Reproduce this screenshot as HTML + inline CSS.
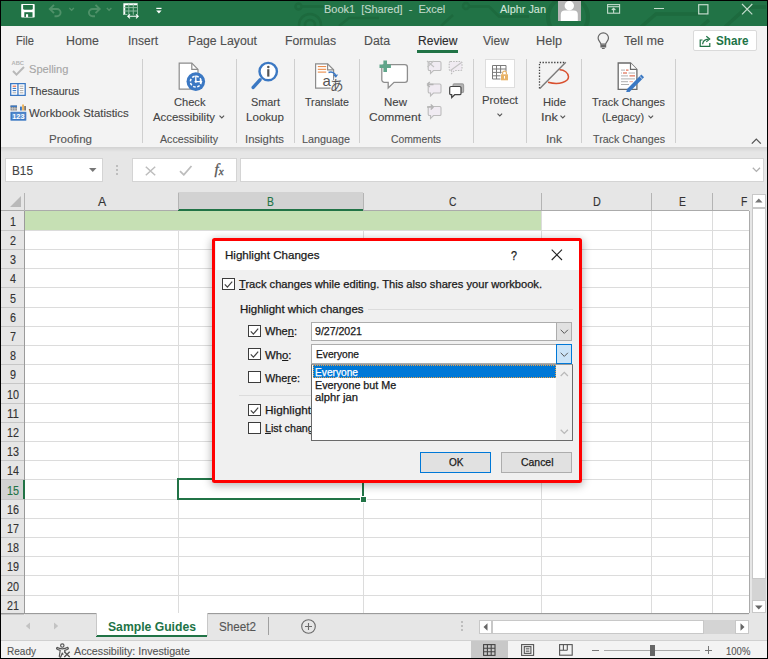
<!DOCTYPE html>
<html lang="en"><head><meta charset="utf-8"><title>Book1 [Shared] - Excel</title>
<style>
html,body{margin:0;padding:0;background:#000;}
body{width:768px;height:659px;position:relative;overflow:hidden;font-family:"Liberation Sans",sans-serif;}
.t{position:absolute;white-space:nowrap;line-height:16px;height:16px;transform-origin:0 50%;-webkit-text-stroke:0.12px;}
.r{position:absolute;}
u{text-decoration:underline;text-underline-offset:1px;}
</style></head><body>
<div class="r" style="left:0px;top:0px;width:768px;height:659px;background:#000;"></div>
<div class="r" style="left:1px;top:1px;width:765.5px;height:25px;background:#217346;"></div>
<div class="r" style="left:1px;top:26px;width:765.5px;height:121px;background:#f3f3f3;"></div>
<div class="r" style="left:1px;top:147px;width:765.5px;height:493px;background:#e6e6e6;"></div>
<div class="r" style="left:1px;top:147px;width:765.5px;height:5px;background:linear-gradient(#d2d2d2,#e6e6e6)"></div>
<div class="r" style="left:1px;top:640px;width:765.5px;height:18px;background:#f3f3f3;"></div>
<div class="r" style="left:1px;top:640px;width:765.5px;height:1px;background:#d0d0d0;"></div>
<svg class="r" style="left:1px;top:1px;" width="765" height="25" viewBox="0 0 765 25"><g fill="none" stroke="#1d6a3e" stroke-width="2.500"><circle cx="297.500" cy="5.500" r="3"/><path d="M300.500 5.500h22l8 8"/><circle cx="309" cy="24" r="11"/><circle cx="309" cy="24" r="5"/><path d="M338 25l10-8h30"/><circle cx="465" cy="5" r="3"/><path d="M468 5.500h20l10 10h30"/><path d="M440 25l12-11"/><circle cx="567" cy="16" r="20" stroke-width="4"/><g stroke-width="3.500"><path d="M640 26l15-13h50M724 26l22-20h20M700 26l8-7"/></g></g></svg>
<div class="t" style="left:323.70px;top:1px;font-size:11.6px;color:#c2dacb;font-weight:400;transform:scaleX(0.9454);">Book1&nbsp; [Shared]&nbsp; -&nbsp; Excel</div>
<div class="t" style="left:500.00px;top:1px;font-size:11.6px;color:#d3e5da;font-weight:400;transform:scaleX(0.9386);">Alphr Jan</div>
<svg class="r" style="left:21px;top:4px;" width="14" height="14" viewBox="0 0 14 14"><rect x="0.200" y="0" width="13.500" height="13.400" rx="0.700" fill="#fff"/><path d="M2.100 1h9.700v3.300a1.500 1.500 0 0 1-1.500 1.500h-6.700a1.500 1.500 0 0 1-1.500-1.500z" fill="#217346"/><rect x="3.300" y="8.200" width="8.200" height="4.700" fill="#217346"/><rect x="5" y="10.200" width="2.100" height="3" fill="#fff"/></svg>
<svg class="r" style="left:48px;top:3px;" width="28" height="15" viewBox="0 0 28 15"><g fill="none" stroke="#4f9169" stroke-width="1.9"><path d="M6 1.800L1.800 6l4.200 4.200"/><path d="M2 6h7a3.600 3.600 0 0 1 0 7.200H6.500"/><path d="M21.300 5l2.300 2.300 2.300-2.300" stroke-width="1.300"/></g></svg>
<svg class="r" style="left:86px;top:3px;" width="28" height="15" viewBox="0 0 28 15"><g fill="none" stroke="#4f9169" stroke-width="1.900"><path d="M9.500 1.800l4.200 4.200-4.200 4.200"/><path d="M13.500 6h-7a3.600 3.600 0 0 0 0 7.200H9"/><path d="M20.800 5l2.300 2.300 2.300-2.300" stroke-width="1.300"/></g></svg>
<svg class="r" style="left:122.5px;top:2.5px;" width="17" height="16" viewBox="0 0 17 16"><path d="M1.300 12V1.300h13.400" fill="none" stroke="#fff" stroke-width="1.900"/><g fill="none" stroke="#8dbda1" stroke-width="1"><path d="M14.500 1.300v10.500M1.300 4.600h13.200M1.300 8h13.200M5.800 1.300v10.500M10.300 1.300v10.500M1.300 11.500h3"/></g><g fill="none" stroke="#fff" stroke-width="1.100"><path d="M4.800 13.300h10.400M7 11.300l-2.200 2 2.200 2M13 11.300l2.200 2-2.200 2"/></g></svg>
<svg class="r" style="left:155.5px;top:6.5px;" width="6" height="8" viewBox="0 0 6 8"><rect x="0.300" y="0.800" width="5.200" height="1.200" fill="#fff"/><path d="M0.200 3.600h5.400l-2.700 3z" fill="#fff"/></svg>
<div class="r" style="left:557.5px;top:1px;width:23.5px;height:20px;background:#b6b6b6;"></div>
<svg class="r" style="left:557.5px;top:1px;" width="24" height="20" viewBox="0 0 24 20"><circle cx="11.300" cy="4.700" r="4.700" fill="#fff"/><path d="M2.800 20v-6.500a4 4 0 0 1 4-4h9a4 4 0 0 1 4 4V20z" fill="#fff"/></svg>
<svg class="r" style="left:607px;top:4px;" width="14" height="10" viewBox="0 0 14 10"><g fill="none" stroke="#c3dccd" stroke-width="1.100"><rect x="0.600" y="0.600" width="12" height="8.600"/><path d="M0.600 2.700h12"/><path d="M6.600 9V4.200M4.800 6l1.800-1.800 1.800 1.800"/></g></svg>
<div class="r" style="left:653.5px;top:8px;width:10.0px;height:1.1999999999999993px;background:#c3dccd;"></div>
<svg class="r" style="left:697.5px;top:3.5px;" width="11" height="11" viewBox="0 0 11 11"><rect x="0.700" y="0.700" width="9.200" height="9.200" fill="none" stroke="#c3dccd" stroke-width="1.200"/></svg>
<svg class="r" style="left:741px;top:3px;" width="12" height="12" viewBox="0 0 12 12"><path d="M1 1l10.300 10.300M11.300 1L1 11.300" stroke="#c3dccd" stroke-width="1.200" fill="none"/></svg>
<div class="t" style="left:16.00px;top:33px;font-size:12px;color:#505050;font-weight:400;transform:scaleX(0.9311);">File</div>
<div class="t" style="left:66.00px;top:33px;font-size:12px;color:#505050;font-weight:400;transform:scaleX(1.0307);">Home</div>
<div class="t" style="left:128.00px;top:33px;font-size:12px;color:#505050;font-weight:400;transform:scaleX(0.9996);">Insert</div>
<div class="t" style="left:188.00px;top:33px;font-size:12px;color:#505050;font-weight:400;transform:scaleX(1.0239);">Page Layout</div>
<div class="t" style="left:285.00px;top:33px;font-size:12px;color:#505050;font-weight:400;transform:scaleX(1.0197);">Formulas</div>
<div class="t" style="left:364.00px;top:33px;font-size:12px;color:#505050;font-weight:400;transform:scaleX(1.0254);">Data</div>
<div class="t" style="left:483.00px;top:33px;font-size:12px;color:#505050;font-weight:400;transform:scaleX(1.0068);">View</div>
<div class="t" style="left:536.00px;top:33px;font-size:12px;color:#505050;font-weight:400;transform:scaleX(1.0533);">Help</div>
<div class="t" style="left:624.00px;top:33px;font-size:12px;color:#505050;font-weight:400;transform:scaleX(1.0522);">Tell me</div>
<div class="t" style="left:417.80px;top:33px;font-size:12px;color:#2b2b2b;font-weight:400;transform:scaleX(1.0029);">Review</div>
<div class="r" style="left:417px;top:50px;width:41.39999999999998px;height:3px;background:#217346;"></div>
<svg class="r" style="left:596px;top:32px;" width="15" height="18" viewBox="0 0 15 18"><g fill="none" stroke="#666" stroke-width="1.200"><path d="M5 12.200c-0.300-1.800-2.900-3.400-2.900-6.100a5.200 5.200 0 0 1 10.400 0c0 2.700-2.600 4.300-2.900 6.100z"/><path d="M5 12.200v2.600h4.600v-2.600M5 13.600h4.600M5.900 16.500h2.800"/></g></svg>
<div class="r" style="left:692.5px;top:29.5px;width:64.0px;height:21.5px;background:#fff;border:1px solid #dadada;box-sizing:border-box;border-radius:2px;"></div>
<div class="t" style="left:715.50px;top:33px;font-size:12px;color:#217346;font-weight:700;-webkit-text-stroke:0;transform:scaleX(0.9746);">Share</div>
<svg class="r" style="left:699px;top:34.5px;" width="13" height="13" viewBox="0 0 13 13"><g fill="none" stroke="#217346" stroke-width="1.200"><path d="M3.500 5h-2.300v6.400h9.600v-3.400"/><path d="M3.600 9.300c0.300-3.200 2.300-5 6-5.200"/><path d="M7.300 1.300l3.400 2.800-3.400 2.800"/></g></svg>
<div class="r" style="left:142.0px;top:59px;width:1.0px;height:84px;background:#cfcfcf;"></div>
<div class="r" style="left:235.5px;top:59px;width:1.0px;height:84px;background:#cfcfcf;"></div>
<div class="r" style="left:294.0px;top:59px;width:1.0px;height:84px;background:#cfcfcf;"></div>
<div class="r" style="left:358.5px;top:59px;width:1.0px;height:84px;background:#cfcfcf;"></div>
<div class="r" style="left:473.0px;top:59px;width:1.0px;height:84px;background:#cfcfcf;"></div>
<div class="r" style="left:526.0px;top:59px;width:1.0px;height:84px;background:#cfcfcf;"></div>
<div class="r" style="left:581.0px;top:59px;width:1.0px;height:84px;background:#cfcfcf;"></div>
<div class="r" style="left:675.0px;top:59px;width:1.0px;height:84px;background:#cfcfcf;"></div>
<div class="t" style="left:29.10px;top:61px;font-size:11.5px;color:#a6a6a6;font-weight:400;transform:scaleX(0.9629);">Spelling</div>
<div class="t" style="left:29.30px;top:83px;font-size:11.5px;color:#444;font-weight:400;transform:scaleX(0.9285);">Thesaurus</div>
<div class="t" style="left:29.30px;top:105px;font-size:11.5px;color:#444;font-weight:400;transform:scaleX(0.9895);">Workbook Statistics</div>
<div class="t" style="left:49.00px;top:131px;font-size:11px;color:#555;font-weight:400;transform:scaleX(1.0494);">Proofing</div>
<div class="t" style="left:174.00px;top:94px;font-size:11.5px;color:#444;font-weight:400;transform:scaleX(0.9658);">Check</div>
<div class="t" style="left:153.00px;top:109px;font-size:11.5px;color:#444;font-weight:400;transform:scaleX(0.9900);">Accessibility</div>
<div class="t" style="left:160.00px;top:131px;font-size:11px;color:#555;font-weight:400;transform:scaleX(0.9682);">Accessibility</div>
<div class="t" style="left:251.00px;top:94px;font-size:11.5px;color:#444;font-weight:400;transform:scaleX(0.9455);">Smart</div>
<div class="t" style="left:246.00px;top:109px;font-size:11.5px;color:#444;font-weight:400;transform:scaleX(1.0071);">Lookup</div>
<div class="t" style="left:245.00px;top:131px;font-size:11px;color:#555;font-weight:400;transform:scaleX(1.0289);">Insights</div>
<div class="t" style="left:305.00px;top:94px;font-size:11.5px;color:#444;font-weight:400;transform:scaleX(0.9262);">Translate</div>
<div class="t" style="left:302.00px;top:131px;font-size:11px;color:#555;font-weight:400;transform:scaleX(0.9808);">Language</div>
<div class="t" style="left:384.00px;top:94px;font-size:11.5px;color:#444;font-weight:400;transform:scaleX(0.9985);">New</div>
<div class="t" style="left:369.00px;top:109px;font-size:11.5px;color:#444;font-weight:400;transform:scaleX(1.0431);">Comment</div>
<div class="t" style="left:391.00px;top:131px;font-size:11px;color:#555;font-weight:400;transform:scaleX(0.9401);">Comments</div>
<div class="t" style="left:482.00px;top:92px;font-size:11.5px;color:#444;font-weight:400;transform:scaleX(0.9881);">Protect</div>
<div class="t" style="left:543.00px;top:94px;font-size:11.5px;color:#444;font-weight:400;transform:scaleX(0.9723);">Hide</div>
<div class="t" style="left:541.00px;top:109px;font-size:11.5px;color:#444;font-weight:400;transform:scaleX(1.1065);">Ink</div>
<div class="t" style="left:546.00px;top:131px;font-size:11px;color:#555;font-weight:400;transform:scaleX(1.0887);">Ink</div>
<div class="t" style="left:592.00px;top:94px;font-size:11.5px;color:#444;font-weight:400;transform:scaleX(0.9413);">Track Changes</div>
<div class="t" style="left:602.00px;top:109px;font-size:11.5px;color:#444;font-weight:400;transform:scaleX(0.9386);">(Legacy)</div>
<div class="t" style="left:593.00px;top:131px;font-size:11px;color:#555;font-weight:400;transform:scaleX(0.9706);">Track Changes</div>
<svg class="r" style="left:219px;top:115px;" width="6" height="4" viewBox="0 0 6 4"><path d="M0.500 0.600l2.300 2.300 2.300-2.300" fill="none" stroke="#555" stroke-width="1.100"/></svg>
<svg class="r" style="left:496.7px;top:113.3px;" width="6" height="4" viewBox="0 0 6 4"><path d="M0.500 0.600l2.300 2.300 2.300-2.300" fill="none" stroke="#555" stroke-width="1.100"/></svg>
<svg class="r" style="left:559.8px;top:115px;" width="6" height="4" viewBox="0 0 6 4"><path d="M0.500 0.600l2.300 2.300 2.300-2.300" fill="none" stroke="#555" stroke-width="1.100"/></svg>
<svg class="r" style="left:648.4px;top:115px;" width="6" height="4" viewBox="0 0 6 4"><path d="M0.500 0.600l2.300 2.300 2.300-2.300" fill="none" stroke="#555" stroke-width="1.100"/></svg>
<svg class="r" style="left:751px;top:137.5px;" width="11" height="7" viewBox="0 0 11 7"><path d="M0.800 5.600l4.500-4.500 4.500 4.500" fill="none" stroke="#555" stroke-width="1.300"/></svg>
<svg class="r" style="left:10px;top:58px" width="17" height="20" viewBox="0 0 17 20"><text x="1.500" y="7.300" font-family="Liberation Sans, sans-serif" font-weight="700" font-size="6.200" fill="#b4b4b4" textLength="12.500" lengthAdjust="spacingAndGlyphs">ABC</text><path d="M3 13l3.500 3.600L14 9" fill="none" stroke="#b8b8b8" stroke-width="2"/></svg>
<svg class="r" style="left:10px;top:83px;" width="16" height="13" viewBox="0 0 16 13"><path d="M0.700 0.700h14.500v11.600h-14.500z" fill="#fff" stroke="#3b78c3" stroke-width="1.300"/><path d="M7.950 0.700v11.600" stroke="#3b78c3" stroke-width="1.300"/><path d="M2.600 3.200h3.600" stroke="#e8603a" stroke-width="1.100"/><path d="M2.600 5.400h3.600" stroke="#3b78c3" stroke-width="1.100"/><path d="M2.600 7.600h3.600" stroke="#3b78c3" stroke-width="1.100"/><path d="M2.600 9.800h3.600M9.700 3.200h3.700M9.700 5.400h3.700M9.700 7.600h3.700M9.700 9.800h3.700" stroke="#aaa" stroke-width="1"/></svg>
<svg class="r" style="left:10px;top:103.500px" width="17" height="17" viewBox="0 0 17 17"><rect x="0.500" y="1.500" width="6.500" height="5" fill="#8a8a8a"/><rect x="0.500" y="1.500" width="6.500" height="1.600" fill="#3b78c3"/><path d="M2.600 3.200v3.300M4.800 3.200v3.300M0.500 4.800h6.500" stroke="#ddd" stroke-width="0.600"/><rect x="10" y="2.600" width="1.900" height="3.900" fill="#3b78c3"/><rect x="12.100" y="0.500" width="1.900" height="6" fill="#edb35c"/><rect x="14.200" y="2" width="1.800" height="4.500" fill="#777"/><rect x="0.900" y="8.200" width="15" height="8" fill="#3b78c3" stroke="#3b78c3" stroke-width="0.800"/><rect x="2" y="9.300" width="12.800" height="5.800" fill="#5d92d2"/><text x="2.300" y="14.800" font-family="Liberation Sans, sans-serif" font-weight="700" font-size="6.600" fill="#fff" textLength="12.200" lengthAdjust="spacingAndGlyphs">123</text></svg>
<svg class="r" style="left:178px;top:61.5px;" width="28" height="30" viewBox="0 0 28 30"><path d="M1.200 1.200h12.600l6.200 6.200v19.800h-18.800z" fill="#fff" stroke="#8c8c8c" stroke-width="1.200"/><path d="M13.800 1.200v6.200h6.200" fill="none" stroke="#8c8c8c" stroke-width="1.200"/><circle cx="17.800" cy="19.600" r="9.300" fill="#3b78c3"/><g fill="none" stroke="#fff"><circle cx="17.800" cy="19.600" r="5.400" stroke-width="1.500" stroke-dasharray="2.600 1.600"/><path d="M17.800 13.400v6.200h5.600" stroke-width="1.300"/><path d="M21.800 17.800l1.900 1.800-1.900 1.800" stroke-width="1.100"/><circle cx="17.800" cy="19.600" r="1.200" fill="#fff" stroke="none"/></g></svg>
<svg class="r" style="left:250px;top:60px" width="32" height="32" viewBox="0 0 32 32"><path d="M10 19.800l-6.800 7.600" stroke="#3b78c3" stroke-width="3.400" stroke-linecap="round"/><circle cx="18.200" cy="11.600" r="8.700" fill="#fff" stroke="#3b78c3" stroke-width="2.400"/><circle cx="18.300" cy="6.900" r="1.250" fill="#555"/><rect x="17.200" y="9.200" width="2.200" height="7.400" fill="#555"/></svg>
<svg class="r" style="left:314px;top:62px" width="30" height="31" viewBox="0 0 30 31"><path d="M1.600 1.800h12l6 6v18.400h-18z" fill="#fff" stroke="#8c8c8c" stroke-width="1.200"/><path d="M13.600 1.800v6h6" fill="none" stroke="#8c8c8c" stroke-width="1.200"/><path d="M3.800 4.600h8.400M3.800 7.300h8.400M3.800 10.100h8.400" stroke="#e8813a" stroke-width="1"/><path d="M14.500 10.500c3.500-1.500 6.500 0.500 7.300 3.600" fill="none" stroke="#3b78c3" stroke-width="1.500"/><path d="M19.200 12.900l2.700 2.900 2.300-3.200z" fill="#3b78c3"/><text x="8.600" y="23.600" font-family="Liberation Sans, sans-serif" font-size="15" fill="#555">a</text><text x="16" y="27.800" font-family="Liberation Sans, 'Noto Sans CJK JP', sans-serif" font-size="13.500" fill="#555" stroke="#f3f3f3" stroke-width="2" paint-order="stroke">あ</text></svg>
<svg class="r" style="left:379px;top:60px;" width="32" height="30" viewBox="0 0 32 30"><path d="M5.400 4.700h20.400a2.600 2.600 0 0 1 2.600 2.600v12.400a2.600 2.600 0 0 1-2.600 2.600h-10.800l-5.800 5.600v-5.600h-3.800a2.600 2.600 0 0 1-2.600-2.600v-12.400a2.600 2.600 0 0 1 2.600-2.600z" fill="#fff" stroke="#8e8e8e" stroke-width="1.300"/><path d="M6.200 0.500v11.400M0.500 6.200h11.400" stroke="#5fa58a" stroke-width="3.600"/></svg>
<svg class="r" style="left:425px;top:58px;" width="42" height="64" viewBox="0 0 42 64"><path d="M4.5 3.5h10.200a1.300 1.300 0 0 1 1.300 1.300v6.400a1.300 1.300 0 0 1-1.300 1.300h-6.200l-3 3v-3h-1a1.300 1.300 0 0 1-1.300-1.300v-6.400a1.300 1.300 0 0 1 1.300-1.300z" fill="#f0ebf2" stroke="#bcbcbc" stroke-width="1.100" /><path d="M2 3l7 6M8.500 3l-6 6" stroke="#c2c2c2" stroke-width="1.100" transform="translate(0,0)"/><path d="M25.5 3.5h10.200a1.300 1.300 0 0 1 1.300 1.300v6.400a1.300 1.300 0 0 1-1.300 1.300h-6.200l-3 3v-3h-1a1.300 1.300 0 0 1-1.300-1.300v-6.400a1.300 1.300 0 0 1 1.300-1.300z" fill="#f0ebf2" stroke="#bcbcbc" stroke-width="1.100" stroke-dasharray="1.500 1.200"/><path d="M36.500 4.500l-11 8" stroke="#c2c2c2" stroke-width="1.100"/><path d="M4.5 26h10.200a1.300 1.300 0 0 1 1.300 1.300v6.400a1.300 1.300 0 0 1-1.300 1.300h-6.200l-3 3v-3h-1a1.300 1.300 0 0 1-1.300-1.300v-6.400a1.300 1.300 0 0 1 1.300-1.300z" fill="#f0ebf2" stroke="#bcbcbc" stroke-width="1.100" /><path d="M2 26.500h6.500M2 26.500l2.800-2.600M2 26.500l2.800 2.600" stroke="#b4b4b4" stroke-width="1.400" fill="none"/><path d="M28 28.500v-1.300a1.300 1.300 0 0 1 1.300-1.300h8a1.300 1.300 0 0 1 1.300 1.300v6a1.300 1.300 0 0 1-1.300 1.300h-1" fill="#b5b5b5" stroke="#9a9a9a" stroke-width="1.100"/><path d="M26 28.500h8.700a1.300 1.300 0 0 1 1.300 1.300v5.600a1.300 1.300 0 0 1-1.300 1.300h-5l-3 2.800v-2.800h-0.700a1.300 1.300 0 0 1-1.300-1.300v-5.600a1.300 1.300 0 0 1 1.300-1.300z" fill="#fff" stroke="#444" stroke-width="1.200"/><path d="M4.5 48.5h10.200a1.300 1.300 0 0 1 1.300 1.300v6.400a1.300 1.300 0 0 1-1.300 1.300h-6.200l-3 3v-3h-1a1.300 1.300 0 0 1-1.300-1.300v-6.400a1.300 1.300 0 0 1 1.300-1.300z" fill="#f0ebf2" stroke="#bcbcbc" stroke-width="1.100" /><path d="M2 49h6.500M8.500 49l-2.800-2.600M8.500 49l-2.800 2.600" stroke="#b4b4b4" stroke-width="1.400" fill="none"/></svg>
<div class="r" style="left:484.5px;top:59px;width:30.0px;height:28.5px;background:#fff;border:1px solid #dedede;box-sizing:border-box;"></div>
<svg class="r" style="left:491px;top:64px;" width="18" height="18" viewBox="0 0 18 18"><g fill="none" stroke="#7a7a7a" stroke-width="1"><path d="M1.500 1.500h13.500v6M1.500 1.500v13.500h8"/><path d="M1.500 5h13.500M1.500 8.400h9M1.500 11.800h8M5.500 1.500v13.500M9.600 1.500v8"/></g><path d="M11.600 10.500v-1.500a1.900 1.900 0 0 1 3.800 0v1.500" fill="none" stroke="#e8b368" stroke-width="1.200"/><rect x="10" y="10.300" width="7" height="6" fill="#e8b368"/><rect x="13" y="12" width="1" height="2.600" fill="#fff"/></svg>
<svg class="r" style="left:538px;top:61px;" width="33" height="30" viewBox="0 0 33 30"><path d="M1.500 27.500v-26h26" fill="none" stroke="#444" stroke-width="1.300" stroke-dasharray="1.400 1.500"/><path d="M27.800 1.200l-26 26.300" stroke="#7a7a7a" stroke-width="1.400"/><path d="M21.500 8.800c4.500-0.200 9 3 9 7 0 5-9 8.500-20.500 5.500" fill="none" stroke="#d9502f" stroke-width="1.500"/></svg>
<svg class="r" style="left:617px;top:61.5px;" width="28" height="30" viewBox="0 0 28 30"><path d="M1.200 1h12.300l6.400 6.400v20h-18.700z" fill="#fff" stroke="#6b6b6b" stroke-width="1.300"/><path d="M13.500 1v6.400h6.400" fill="#fff" stroke="#6b6b6b" stroke-width="1.200"/><g stroke-width="1"><path d="M4 8.100h4M11.500 11h6.500M4 13.900h7M4 16.900h14M4 19.700h7M4 22.500h8" stroke="#b0b0b0"/><path d="M9 8.100h2.500M6 11h4M12.500 13.900h5.500" stroke="#d9502f"/><path d="M12.500 19.700h3.500" stroke="#eea38e"/><path d="M4 11h0.800" stroke="#999"/></g><path d="M25.700 13.900l-15 15.200" stroke="#3b78c3" stroke-width="3.800"/><path d="M12.300 27.500l-2.600 2.400" stroke="#3b78c3" stroke-width="2"/><path d="M22.700 14.300l2.800 2.800" stroke="#f3f3f3" stroke-width="0.800"/></svg>
<div class="r" style="left:5px;top:157.7px;width:97.5px;height:24.600000000000023px;background:#fff;border:1px solid #d4d4d4;box-sizing:border-box;"></div>
<div class="t" style="left:12.00px;top:163px;font-size:12px;color:#444;font-weight:400;transform:scaleX(0.9837);">B15</div>
<svg class="r" style="left:89px;top:168px;" width="8" height="5" viewBox="0 0 8 5"><path d="M0 0h7.500l-3.750 4z" fill="#777"/></svg>
<div class="r" style="left:116.3px;top:165px;width:1.7999999999999972px;height:1.8000000000000114px;background:#b0b0b0;border-radius:1px;"></div>
<div class="r" style="left:116.3px;top:169px;width:1.7999999999999972px;height:1.8000000000000114px;background:#b0b0b0;border-radius:1px;"></div>
<div class="r" style="left:116.3px;top:173px;width:1.7999999999999972px;height:1.8000000000000114px;background:#b0b0b0;border-radius:1px;"></div>
<div class="r" style="left:131.7px;top:157.7px;width:105.80000000000001px;height:24.600000000000023px;background:#fff;border:1px solid #d4d4d4;box-sizing:border-box;"></div>
<svg class="r" style="left:144.5px;top:165.5px;" width="11" height="10" viewBox="0 0 11 10"><path d="M0.800 0.800l9.400 8.400M10.200 0.800L0.800 9.200" stroke="#bdbdbd" stroke-width="1.500" fill="none"/></svg>
<svg class="r" style="left:178.5px;top:164.5px;" width="14" height="11" viewBox="0 0 14 11"><path d="M1 6.200l3.800 3.600L12.500 1" stroke="#bdbdbd" stroke-width="1.800" fill="none"/></svg>
<div class="t" style="left:214.500px;top:161px;font-family:'Liberation Serif',serif;font-style:italic;font-size:15px;color:#555;-webkit-text-stroke:0.3px;letter-spacing:-0.5px">f<span style="font-size:11px;position:relative;top:1px;left:0.5px">x</span></div>
<div class="r" style="left:240px;top:157.7px;width:524px;height:24.600000000000023px;background:#fff;border:1px solid #d4d4d4;box-sizing:border-box;"></div>
<svg class="r" style="left:752px;top:167px;" width="9" height="6" viewBox="0 0 9 6"><path d="M0.800 0.800l3.600 3.600 3.600-3.600" fill="none" stroke="#b0b0b0" stroke-width="1.3"/></svg>
<div class="r" style="left:24.5px;top:211px;width:724.5px;height:402px;background:#fff;"></div>
<div class="r" style="left:1px;top:191px;width:748px;height:20px;background:#e6e6e6;"></div>
<div class="r" style="left:178px;top:192px;width:185px;height:19px;background:#d2d2d2;"></div>
<div class="r" style="left:178px;top:208.5px;width:185px;height:2.0px;background:#217346;"></div>
<div class="r" style="left:1px;top:210px;width:748px;height:1px;background:#ababab;"></div>
<div class="r" style="left:24px;top:193px;width:1px;height:18px;background:#b4b4b4;"></div>
<div class="r" style="left:178px;top:208.5px;width:185px;height:2.5px;background:#217346;"></div>
<svg class="r" style="left:9px;top:195px;" width="13" height="13" viewBox="0 0 13 13"><path d="M12 1v11H1z" fill="#b9b9b9"/></svg>
<div class="r" style="left:177.5px;top:193px;width:1.0px;height:17px;background:#b4b4b4;"></div>
<div class="r" style="left:362.5px;top:193px;width:1.0px;height:17px;background:#b4b4b4;"></div>
<div class="r" style="left:540.5px;top:193px;width:1.0px;height:17px;background:#b4b4b4;"></div>
<div class="r" style="left:651.0px;top:193px;width:1.0px;height:17px;background:#b4b4b4;"></div>
<div class="r" style="left:712.0px;top:193px;width:1.0px;height:17px;background:#b4b4b4;"></div>
<div class="t" style="left:98.00px;top:194px;font-size:12px;color:#333;font-weight:400;transform:scaleX(1.0245);">A</div>
<div class="t" style="left:267.40px;top:194px;font-size:12px;color:#217346;font-weight:400;transform:scaleX(0.8600);">B</div>
<div class="t" style="left:448.70px;top:194px;font-size:12px;color:#333;font-weight:400;transform:scaleX(0.8600);">C</div>
<div class="t" style="left:592.70px;top:194px;font-size:12px;color:#333;font-weight:400;transform:scaleX(0.9003);">D</div>
<div class="t" style="left:678.80px;top:194px;font-size:12px;color:#333;font-weight:400;transform:scaleX(0.8600);">E</div>
<div class="t" style="left:741.30px;top:194px;font-size:12px;color:#333;font-weight:400;transform:scaleX(0.8600);">F</div>
<div class="r" style="left:24.5px;top:211px;width:516.5px;height:19.19999999999999px;background:#c6e0b4;"></div>
<div class="r" style="left:24.5px;top:229.7px;width:724.5px;height:1.0px;background:#dcdcdc;"></div>
<div class="r" style="left:24.5px;top:248.9px;width:724.5px;height:1.0px;background:#dcdcdc;"></div>
<div class="r" style="left:24.5px;top:268.1px;width:724.5px;height:1.0px;background:#dcdcdc;"></div>
<div class="r" style="left:24.5px;top:287.3px;width:724.5px;height:1.0px;background:#dcdcdc;"></div>
<div class="r" style="left:24.5px;top:306.5px;width:724.5px;height:1.0px;background:#dcdcdc;"></div>
<div class="r" style="left:24.5px;top:325.7px;width:724.5px;height:1.0px;background:#dcdcdc;"></div>
<div class="r" style="left:24.5px;top:344.9px;width:724.5px;height:1.0px;background:#dcdcdc;"></div>
<div class="r" style="left:24.5px;top:364.1px;width:724.5px;height:1.0px;background:#dcdcdc;"></div>
<div class="r" style="left:24.5px;top:383.29999999999995px;width:724.5px;height:1.0px;background:#dcdcdc;"></div>
<div class="r" style="left:24.5px;top:402.5px;width:724.5px;height:1.0px;background:#dcdcdc;"></div>
<div class="r" style="left:24.5px;top:421.7px;width:724.5px;height:1.0px;background:#dcdcdc;"></div>
<div class="r" style="left:24.5px;top:440.9px;width:724.5px;height:1.0px;background:#dcdcdc;"></div>
<div class="r" style="left:24.5px;top:460.1px;width:724.5px;height:1.0px;background:#dcdcdc;"></div>
<div class="r" style="left:24.5px;top:479.3px;width:724.5px;height:1.0px;background:#dcdcdc;"></div>
<div class="r" style="left:24.5px;top:498.5px;width:724.5px;height:1.0px;background:#dcdcdc;"></div>
<div class="r" style="left:24.5px;top:517.7px;width:724.5px;height:1.0px;background:#dcdcdc;"></div>
<div class="r" style="left:24.5px;top:536.9px;width:724.5px;height:1.0px;background:#dcdcdc;"></div>
<div class="r" style="left:24.5px;top:556.0999999999999px;width:724.5px;height:1.0px;background:#dcdcdc;"></div>
<div class="r" style="left:24.5px;top:575.3px;width:724.5px;height:1.0px;background:#dcdcdc;"></div>
<div class="r" style="left:24.5px;top:594.5px;width:724.5px;height:1.0px;background:#dcdcdc;"></div>
<div class="r" style="left:24.5px;top:613.7px;width:724.5px;height:1.0px;background:#dcdcdc;"></div>
<div class="r" style="left:177.5px;top:230.2px;width:1.0px;height:382.8px;background:#dcdcdc;"></div>
<div class="r" style="left:362.5px;top:230.2px;width:1.0px;height:382.8px;background:#dcdcdc;"></div>
<div class="r" style="left:540.5px;top:211px;width:1.0px;height:402px;background:#dcdcdc;"></div>
<div class="r" style="left:651.0px;top:211px;width:1.0px;height:402px;background:#dcdcdc;"></div>
<div class="r" style="left:712.0px;top:211px;width:1.0px;height:402px;background:#dcdcdc;"></div>
<div class="r" style="left:1px;top:211px;width:23.5px;height:402px;background:#e6e6e6;"></div>
<div class="r" style="left:1px;top:479.8px;width:23.5px;height:19.19999999999999px;background:#d2d2d2;"></div>
<div class="r" style="left:1px;top:229.7px;width:23px;height:1.0px;background:#c6c6c6;"></div>
<div class="r" style="left:1px;top:248.9px;width:23px;height:1.0px;background:#c6c6c6;"></div>
<div class="r" style="left:1px;top:268.1px;width:23px;height:1.0px;background:#c6c6c6;"></div>
<div class="r" style="left:1px;top:287.3px;width:23px;height:1.0px;background:#c6c6c6;"></div>
<div class="r" style="left:1px;top:306.5px;width:23px;height:1.0px;background:#c6c6c6;"></div>
<div class="r" style="left:1px;top:325.7px;width:23px;height:1.0px;background:#c6c6c6;"></div>
<div class="r" style="left:1px;top:344.9px;width:23px;height:1.0px;background:#c6c6c6;"></div>
<div class="r" style="left:1px;top:364.1px;width:23px;height:1.0px;background:#c6c6c6;"></div>
<div class="r" style="left:1px;top:383.29999999999995px;width:23px;height:1.0px;background:#c6c6c6;"></div>
<div class="r" style="left:1px;top:402.5px;width:23px;height:1.0px;background:#c6c6c6;"></div>
<div class="r" style="left:1px;top:421.7px;width:23px;height:1.0px;background:#c6c6c6;"></div>
<div class="r" style="left:1px;top:440.9px;width:23px;height:1.0px;background:#c6c6c6;"></div>
<div class="r" style="left:1px;top:460.1px;width:23px;height:1.0px;background:#c6c6c6;"></div>
<div class="r" style="left:1px;top:479.3px;width:23px;height:1.0px;background:#c6c6c6;"></div>
<div class="r" style="left:1px;top:498.5px;width:23px;height:1.0px;background:#c6c6c6;"></div>
<div class="r" style="left:1px;top:517.7px;width:23px;height:1.0px;background:#c6c6c6;"></div>
<div class="r" style="left:1px;top:536.9px;width:23px;height:1.0px;background:#c6c6c6;"></div>
<div class="r" style="left:1px;top:556.0999999999999px;width:23px;height:1.0px;background:#c6c6c6;"></div>
<div class="r" style="left:1px;top:575.3px;width:23px;height:1.0px;background:#c6c6c6;"></div>
<div class="r" style="left:1px;top:594.5px;width:23px;height:1.0px;background:#c6c6c6;"></div>
<div class="r" style="left:1px;top:613.7px;width:23px;height:1.0px;background:#c6c6c6;"></div>
<div class="r" style="left:23.5px;top:211px;width:1.0px;height:402px;background:#9b9b9b;"></div>
<div class="r" style="left:22.5px;top:479.8px;width:2.0px;height:19.19999999999999px;background:#217346;"></div>
<div class="t" style="left:9.50px;top:214px;font-size:12.5px;color:#333;font-weight:400;transform:scaleX(0.8633);">1</div>
<div class="t" style="left:9.50px;top:233px;font-size:12.5px;color:#333;font-weight:400;transform:scaleX(0.8633);">2</div>
<div class="t" style="left:9.50px;top:252px;font-size:12.5px;color:#333;font-weight:400;transform:scaleX(0.8633);">3</div>
<div class="t" style="left:9.50px;top:271px;font-size:12.5px;color:#333;font-weight:400;transform:scaleX(0.8633);">4</div>
<div class="t" style="left:9.50px;top:291px;font-size:12.5px;color:#333;font-weight:400;transform:scaleX(0.8633);">5</div>
<div class="t" style="left:9.50px;top:310px;font-size:12.5px;color:#333;font-weight:400;transform:scaleX(0.8633);">6</div>
<div class="t" style="left:9.50px;top:329px;font-size:12.5px;color:#333;font-weight:400;transform:scaleX(0.8633);">7</div>
<div class="t" style="left:9.50px;top:348px;font-size:12.5px;color:#333;font-weight:400;transform:scaleX(0.8633);">8</div>
<div class="t" style="left:9.50px;top:367px;font-size:12.5px;color:#333;font-weight:400;transform:scaleX(0.8633);">9</div>
<div class="t" style="left:6.50px;top:387px;font-size:12.5px;color:#333;font-weight:400;transform:scaleX(0.8633);">10</div>
<div class="t" style="left:6.50px;top:406px;font-size:12.5px;color:#333;font-weight:400;transform:scaleX(0.9249);">11</div>
<div class="t" style="left:6.50px;top:425px;font-size:12.5px;color:#333;font-weight:400;transform:scaleX(0.8633);">12</div>
<div class="t" style="left:6.50px;top:444px;font-size:12.5px;color:#333;font-weight:400;transform:scaleX(0.8633);">13</div>
<div class="t" style="left:6.50px;top:463px;font-size:12.5px;color:#333;font-weight:400;transform:scaleX(0.8633);">14</div>
<div class="t" style="left:6.50px;top:483px;font-size:12.5px;color:#217346;font-weight:400;transform:scaleX(0.8633);">15</div>
<div class="t" style="left:6.50px;top:502px;font-size:12.5px;color:#333;font-weight:400;transform:scaleX(0.8633);">16</div>
<div class="t" style="left:6.50px;top:521px;font-size:12.5px;color:#333;font-weight:400;transform:scaleX(0.8633);">17</div>
<div class="t" style="left:6.50px;top:540px;font-size:12.5px;color:#333;font-weight:400;transform:scaleX(0.8633);">18</div>
<div class="t" style="left:6.50px;top:559px;font-size:12.5px;color:#333;font-weight:400;transform:scaleX(0.8633);">19</div>
<div class="t" style="left:6.50px;top:579px;font-size:12.5px;color:#333;font-weight:400;transform:scaleX(0.8633);">20</div>
<div class="t" style="left:6.50px;top:598px;font-size:12.5px;color:#333;font-weight:400;transform:scaleX(0.8633);">21</div>
<div class="r" style="left:177px;top:478.2px;width:187px;height:22.100000000000023px;border:2px solid #217346;box-sizing:border-box;"></div>
<div class="r" style="left:359.5px;top:495.5px;width:7.5px;height:7.199999999999989px;background:#fff;"></div>
<div class="r" style="left:360.5px;top:496.5px;width:5.5px;height:5.199999999999989px;background:#217346;"></div>
<div class="r" style="left:748.5px;top:211px;width:1.0px;height:402px;background:#ababab;"></div>
<div class="r" style="left:752px;top:194px;width:13.5px;height:14px;background:#fff;border:1px solid #c8c8c8;box-sizing:border-box;"></div>
<svg class="r" style="left:755px;top:198px;" width="8" height="5" viewBox="0 0 8 5"><path d="M0 4.500h7.500L3.750 0.500z" fill="#777"/></svg>
<div class="r" style="left:752px;top:208px;width:13.5px;height:370.5px;background:#fff;border:1px solid #c8c8c8;box-sizing:border-box;"></div>
<div class="r" style="left:752px;top:578.5px;width:13.5px;height:21.5px;background:#d4d4d4;"></div>
<div class="r" style="left:752px;top:600px;width:13.5px;height:13px;background:#fff;border:1px solid #c8c8c8;box-sizing:border-box;"></div>
<svg class="r" style="left:755px;top:604.5px;" width="8" height="5" viewBox="0 0 8 5"><path d="M0 0.500h7.500L3.750 4.500z" fill="#666"/></svg>
<div class="r" style="left:1px;top:612.5px;width:748px;height:1.0px;background:#9b9b9b;"></div>
<div class="r" style="left:96px;top:612.5px;width:111px;height:24.5px;background:#fff;"></div>
<div class="r" style="left:96px;top:635px;width:111px;height:2px;background:#217346;"></div>
<div class="r" style="left:95.5px;top:613px;width:1.0px;height:23px;background:#c8c8c8;"></div>
<div class="r" style="left:206.5px;top:613px;width:1.0px;height:23px;background:#c8c8c8;"></div>
<div class="t" style="left:108.00px;top:619px;font-size:12px;color:#217346;font-weight:700;-webkit-text-stroke:0;transform:scaleX(1.0150);">Sample Guides</div>
<div class="t" style="left:219.00px;top:619px;font-size:12px;color:#555;font-weight:400;transform:scaleX(0.9730);">Sheet2</div>
<div class="r" style="left:268px;top:617px;width:1px;height:18px;background:#a0a0a0;"></div>
<svg class="r" style="left:300px;top:618px;" width="17" height="17" viewBox="0 0 17 17"><g fill="none" stroke="#6a6a6a" stroke-width="1.1"><circle cx="8.500" cy="8.500" r="6.800"/><path d="M8.500 5v7M5 8.500h7"/></g></svg>
<svg class="r" style="left:25px;top:622px;" width="6" height="8" viewBox="0 0 6 8"><path d="M5 0.500v7L0.800 4z" fill="#c3c3c3"/></svg>
<svg class="r" style="left:53px;top:622px;" width="6" height="8" viewBox="0 0 6 8"><path d="M1 0.500v7L5.200 4z" fill="#c3c3c3"/></svg>
<div class="r" style="left:461.2px;top:621.2px;width:1.8000000000000114px;height:1.7999999999999545px;background:#b0b0b0;border-radius:1px;"></div>
<div class="r" style="left:461.2px;top:625.3px;width:1.8000000000000114px;height:1.7999999999999545px;background:#b0b0b0;border-radius:1px;"></div>
<div class="r" style="left:461.2px;top:629.3px;width:1.8000000000000114px;height:1.7999999999999545px;background:#b0b0b0;border-radius:1px;"></div>
<div class="r" style="left:478.5px;top:620px;width:270.0px;height:13.5px;background:#d4d4d4;"></div>
<div class="r" style="left:478.5px;top:620px;width:13.5px;height:13.5px;background:#fff;border:1px solid #c8c8c8;box-sizing:border-box;"></div>
<svg class="r" style="left:483px;top:623px;" width="5" height="8" viewBox="0 0 5 8"><path d="M4.500 0.300v7.400L0.500 4z" fill="#666"/></svg>
<div class="r" style="left:492px;top:620px;width:211.5px;height:13.5px;background:#fff;border:1px solid #c8c8c8;box-sizing:border-box;"></div>
<div class="r" style="left:734.5px;top:620px;width:14.0px;height:13.5px;background:#fff;border:1px solid #c8c8c8;box-sizing:border-box;"></div>
<svg class="r" style="left:739.5px;top:623px;" width="5" height="8" viewBox="0 0 5 8"><path d="M0.500 0.300v7.400L4.500 4z" fill="#666"/></svg>
<div class="t" style="left:7.00px;top:643px;font-size:10.8px;color:#555;font-weight:400;transform:scaleX(0.9288);">Ready</div>
<div class="t" style="left:74.00px;top:643px;font-size:10.8px;color:#555;font-weight:400;transform:scaleX(0.9910);">Accessibility: Investigate</div>
<svg class="r" style="left:55.5px;top:643px;" width="15" height="15" viewBox="0 0 15 15"><g fill="none" stroke="#555" stroke-width="1.150" stroke-linejoin="round"><circle cx="6.300" cy="2.500" r="1.700"/><path d="M0.800 4.300c1.700 1 3.300 1.500 5.500 1.500s3.800-0.500 5.500-1.500l0.600 1.500c-1.200 0.800-2.400 1.300-3.700 1.600l0.300 2M3.200 13.800l1-6.400c-1.300-0.300-2.500-0.800-3.700-1.600l0.300-1.500M3.200 13.800l1.400 0.400 1.700-4.200 0.900 1.700"/><path d="M8.300 8.800l5.400 5.200M13.700 8.800l-5.400 5.200" stroke-width="1.300"/></g></svg>
<div class="r" style="left:470.5px;top:641px;width:37.0px;height:17px;background:#c8c8c8;"></div>
<svg class="r" style="left:482.5px;top:644px;" width="13" height="12" viewBox="0 0 13 12"><g fill="none" stroke="#444" stroke-width="1.100"><rect x="0.600" y="0.600" width="11.400" height="10.800"/><path d="M0.600 4.200h11.400M0.600 7.800h11.400M4.400 0.600v10.800M8.200 0.600v10.800"/></g></svg>
<svg class="r" style="left:521px;top:644px;" width="14" height="12" viewBox="0 0 14 12"><g fill="none" stroke="#555" stroke-width="1.100"><rect x="0.600" y="0.600" width="12" height="10.800"/><rect x="3.300" y="2.600" width="6.600" height="6.800"/><path d="M4.800 4.400h3.600M4.800 6h3.600M4.800 7.600h3.600" stroke-width="0.800"/></g></svg>
<svg class="r" style="left:559.2px;top:644px;" width="14" height="12" viewBox="0 0 14 12"><g fill="none" stroke="#555" stroke-width="1.100"><rect x="0.600" y="0.600" width="12.600" height="10.600"/><path d="M4.400 0.600v5.600M8.300 0.600v5.600M0.600 6.200h7.700"/></g></svg>
<div class="r" style="left:591.5px;top:649.5px;width:7.0px;height:1.0px;background:#777;"></div>
<div class="r" style="left:604px;top:649.6px;width:96px;height:1.0px;background:#a8a8a8;"></div>
<div class="r" style="left:649.5px;top:644.5px;width:5.0px;height:11.5px;background:#666;"></div>
<div class="r" style="left:704.5px;top:649.5px;width:7.5px;height:1.0px;background:#777;"></div>
<div class="r" style="left:707.75px;top:646.2px;width:1.0px;height:7.599999999999909px;background:#777;"></div>
<div class="t" style="left:725.60px;top:643px;font-size:10.8px;color:#555;font-weight:400;transform:scaleX(0.8832);">100%</div>
<div class="r" style="left:212.1px;top:237.9px;width:369.9px;height:245.1px;box-shadow:0 2px 9px 1px rgba(0,0,0,0.28);border-radius:3px;"></div>
<div class="r" style="left:212.1px;top:237.9px;width:369.9px;height:245.1px;background:#f0f0f0;border:3.5px solid #ff0000;border-bottom-width:3.1px;box-sizing:border-box;border-radius:2.5px;"></div>
<div class="r" style="left:215.5px;top:241px;width:363.0px;height:28.80000000000001px;background:#fff;"></div>
<div class="t" style="left:224.50px;top:247px;font-size:11px;color:#1a1a1a;font-weight:400;transform:scaleX(1.0513);-webkit-text-stroke:0.25px;">Highlight Changes</div>
<div class="t" style="left:510.50px;top:248px;font-size:12.5px;color:#1a1a1a;font-weight:400;transform:scaleX(0.8600);-webkit-text-stroke:0.25px;">?</div>
<svg class="r" style="left:551px;top:249px;" width="12" height="12" viewBox="0 0 12 12"><path d="M0.700 0.700l10.300 10.300M11 0.700L0.700 11" stroke="#222" stroke-width="1.100" fill="none"/></svg>
<div class="r" style="left:222px;top:277.6px;width:12.5px;height:12.5px;background:#fff;border:1px solid #3c3c3c;box-sizing:border-box;"></div>
<svg class="r" style="left:222px;top:277.6px;" width="13" height="13" viewBox="0 0 13 13"><path d="M2.800 6.400l2.600 2.800 4.800-5.600" fill="none" stroke="#444" stroke-width="1.200"/></svg>
<div class="t" style="left:238.50px;top:276px;font-size:10.5px;color:#1a1a1a;font-weight:400;transform:scaleX(1.0617);-webkit-text-stroke:0.25px;"><u>T</u>rack changes while editing. This also shares your workbook.</div>
<div class="t" style="left:239.50px;top:301px;font-size:10.5px;color:#1a1a1a;font-weight:400;transform:scaleX(1.0907);-webkit-text-stroke:0.25px;">Highlight which changes</div>
<div class="r" style="left:368px;top:309px;width:204.5px;height:1px;background:#dcdcdc;"></div>
<div class="r" style="left:248px;top:324.5px;width:12.5px;height:12.5px;background:#fff;border:1px solid #3c3c3c;box-sizing:border-box;"></div>
<svg class="r" style="left:248px;top:324.5px;" width="13" height="13" viewBox="0 0 13 13"><path d="M2.800 6.400l2.600 2.800 4.800-5.600" fill="none" stroke="#444" stroke-width="1.200"/></svg>
<div class="t" style="left:264.50px;top:323px;font-size:10.5px;color:#1a1a1a;font-weight:400;transform:scaleX(1.0545);-webkit-text-stroke:0.25px;">Whe<u>n</u>:</div>
<div class="r" style="left:248px;top:347.5px;width:12.5px;height:12.5px;background:#fff;border:1px solid #3c3c3c;box-sizing:border-box;"></div>
<svg class="r" style="left:248px;top:347.5px;" width="13" height="13" viewBox="0 0 13 13"><path d="M2.800 6.400l2.600 2.800 4.800-5.600" fill="none" stroke="#444" stroke-width="1.200"/></svg>
<div class="t" style="left:264.50px;top:347px;font-size:10.5px;color:#1a1a1a;font-weight:400;transform:scaleX(1.0813);-webkit-text-stroke:0.25px;">Wh<u>o</u>:</div>
<div class="r" style="left:248px;top:370.7px;width:12.5px;height:12.5px;background:#fff;border:1px solid #3c3c3c;box-sizing:border-box;"></div>
<div class="t" style="left:264.50px;top:370px;font-size:10.5px;color:#1a1a1a;font-weight:400;transform:scaleX(1.0342);-webkit-text-stroke:0.25px;">Whe<u>r</u>e:</div>
<div class="r" style="left:239px;top:395px;width:81px;height:1px;background:#dcdcdc;"></div>
<div class="r" style="left:248px;top:403.7px;width:12.5px;height:12.5px;background:#fff;border:1px solid #3c3c3c;box-sizing:border-box;"></div>
<svg class="r" style="left:248px;top:403.7px;" width="13" height="13" viewBox="0 0 13 13"><path d="M2.800 6.400l2.600 2.800 4.800-5.600" fill="none" stroke="#444" stroke-width="1.200"/></svg>
<div class="t" style="left:264.60px;top:402px;font-size:10.5px;letter-spacing:0.038px;color:#1a1a1a;font-weight:400;transform:scaleX(1.1200);-webkit-text-stroke:0.25px;">Highlight</div>
<div class="r" style="left:248px;top:421.7px;width:12.5px;height:12.5px;background:#fff;border:1px solid #3c3c3c;box-sizing:border-box;"></div>
<div class="t" style="left:264.60px;top:420px;font-size:10.5px;color:#1a1a1a;font-weight:400;transform:scaleX(1.0185);-webkit-text-stroke:0.25px;"><u>L</u>ist changes</div>
<div class="r" style="left:311px;top:322px;width:261px;height:19px;background:#fff;border:1px solid #adadad;box-sizing:border-box;"></div>
<div class="r" style="left:556px;top:322px;width:16px;height:19px;background:#e1e1e1;border:1px solid #adadad;box-sizing:border-box;"></div>
<svg class="r" style="left:560px;top:329px;" width="9" height="6" viewBox="0 0 9 6"><path d="M0.700 0.800l3.600 3.600 3.600-3.600" fill="none" stroke="#555" stroke-width="1"/></svg>
<div class="t" style="left:315.00px;top:324px;font-size:10px;color:#1a1a1a;font-weight:400;transform:scaleX(1.0564);-webkit-text-stroke:0.25px;">9/27/2021</div>
<div class="r" style="left:311px;top:344px;width:261px;height:20px;background:#fff;border:1px solid #adadad;box-sizing:border-box;"></div>
<div class="r" style="left:556px;top:344px;width:16px;height:20px;background:#cce4f7;border:1px solid #0078d7;box-sizing:border-box;"></div>
<svg class="r" style="left:560px;top:351.5px;" width="9" height="6" viewBox="0 0 9 6"><path d="M0.700 0.800l3.600 3.600 3.600-3.600" fill="none" stroke="#555" stroke-width="1"/></svg>
<div class="t" style="left:315.60px;top:347px;font-size:10px;color:#1a1a1a;font-weight:400;transform:scaleX(1.0178);-webkit-text-stroke:0.25px;">Everyone</div>
<div class="r" style="left:311.3px;top:363.5px;width:261.7px;height:77.0px;background:#fff;border:1px solid #6a6a6a;box-sizing:border-box;border-top-color:#9a9a9a;"></div>
<div class="r" style="left:556px;top:364.5px;width:16px;height:75.0px;background:#f0f0f0;"></div>
<div class="r" style="left:312.5px;top:364.5px;width:243.0px;height:13.100000000000023px;background:#0078d7;outline:1px dotted #e8a24a;outline-offset:-1px;"></div>
<div class="t" style="left:315.00px;top:365px;font-size:10px;color:#fff;font-weight:400;transform:scaleX(1.0178);-webkit-text-stroke:0.25px;">Everyone</div>
<div class="t" style="left:315.00px;top:378px;font-size:10px;color:#1a1a1a;font-weight:400;transform:scaleX(1.0741);-webkit-text-stroke:0.25px;">Everyone but Me</div>
<div class="t" style="left:315.00px;top:390px;font-size:10px;letter-spacing:0.004px;color:#1a1a1a;font-weight:400;transform:scaleX(1.1200);-webkit-text-stroke:0.25px;">alphr jan</div>
<svg class="r" style="left:560px;top:370.5px;" width="9" height="6" viewBox="0 0 9 6"><path d="M0.700 5l3.600-3.600 3.600 3.600" fill="none" stroke="#b9b9b9" stroke-width="1.300"/></svg>
<svg class="r" style="left:560px;top:428.5px;" width="9" height="6" viewBox="0 0 9 6"><path d="M0.700 0.800l3.600 3.600 3.600-3.600" fill="none" stroke="#b9b9b9" stroke-width="1.300"/></svg>
<div class="r" style="left:420px;top:451.5px;width:71px;height:21.0px;background:#e1e1e1;border:1.800px solid #0078d7;box-sizing:border-box;"></div>
<div class="t" style="left:448.50px;top:454px;font-size:10.5px;color:#1a1a1a;font-weight:400;transform:scaleX(0.9557);-webkit-text-stroke:0.25px;">OK</div>
<div class="r" style="left:500.5px;top:451.5px;width:71.5px;height:21.0px;background:#e1e1e1;border:1px solid #adadad;box-sizing:border-box;"></div>
<div class="t" style="left:520.50px;top:454px;font-size:10.5px;color:#1a1a1a;font-weight:400;transform:scaleX(0.9943);-webkit-text-stroke:0.25px;">Cancel</div>
</body></html>
